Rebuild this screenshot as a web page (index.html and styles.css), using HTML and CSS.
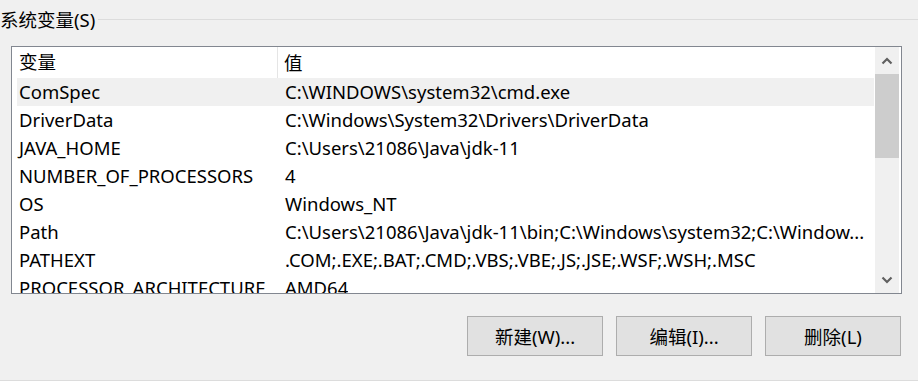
FILE: index.html
```html
<!DOCTYPE html>
<html lang="zh">
<head>
<meta charset="utf-8">
<link rel="stylesheet" href="styles.css">
</head>
<body>
<div class="page">
  <div class="group-title">
    <span class="title-text">系统变量(S)</span>
    <span class="title-line"></span>
  </div>
  <div class="list">
    <div class="list-body">
      <div class="header">
        <div class="cell name">变量</div>
        <div class="cell value">值</div>
      </div>
      <div class="row selected"><div class="cell name">ComSpec</div><div class="cell value">C:\WINDOWS\system32\cmd.exe</div></div>
      <div class="row"><div class="cell name">DriverData</div><div class="cell value">C:\Windows\System32\Drivers\DriverData</div></div>
      <div class="row"><div class="cell name">JAVA_HOME</div><div class="cell value">C:\Users\21086\Java\jdk-11</div></div>
      <div class="row"><div class="cell name">NUMBER_OF_PROCESSORS</div><div class="cell value">4</div></div>
      <div class="row"><div class="cell name">OS</div><div class="cell value">Windows_NT</div></div>
      <div class="row"><div class="cell name">Path</div><div class="cell value">C:\Users\21086\Java\jdk-11\bin;C:\Windows\system32;C:\Window...</div></div>
      <div class="row"><div class="cell name">PATHEXT</div><div class="cell value">.COM;.EXE;.BAT;.CMD;.VBS;.VBE;.JS;.JSE;.WSF;.WSH;.MSC</div></div>
      <div class="row"><div class="cell name">PROCESSOR_ARCHITECTURE</div><div class="cell value">AMD64</div></div>
    </div>
    <div class="scrollbar">
      <div class="arrow">
        <svg width="12" height="8" viewBox="0 0 12 8"><path d="M1.5 6.5 L6 2 L10.5 6.5" fill="none" stroke="#606060" stroke-width="2.2"/></svg>
      </div>
      <div class="track">
        <div class="thumb"></div>
      </div>
      <div class="arrow">
        <svg width="12" height="8" viewBox="0 0 12 8"><path d="M1.5 1.5 L6 6 L10.5 1.5" fill="none" stroke="#606060" stroke-width="2.2"/></svg>
      </div>
    </div>
  </div>
  <div class="buttons">
    <button class="btn">新建(W)...</button>
    <button class="btn">编辑(I)...</button>
    <button class="btn">删除(L)</button>
  </div>
  <div class="bottom-line"></div>
</div>
</body>
</html>
```

FILE: styles.css
```css
html, body {
  margin: 0;
  padding: 0;
  background: #f0f0f0;
}
body {
  font-family: "Noto Sans", "Noto Sans CJK SC", sans-serif;
  font-size: 18.5px;
  color: #000;
}
.page {
  width: 918px;
  height: 381px;
  display: flex;
  flex-direction: column;
  overflow: hidden;
}
.group-title {
  display: flex;
  align-items: center;
  height: 38px;
}
.title-text {
  line-height: 38px;
  white-space: nowrap;
  position: relative;
  top: 1px;
}
.title-line {
  flex: 1;
  height: 1px;
  background: #dcdcdc;
  margin-left: 3px;
  margin-top: 1px;
}
.list {
  margin-top: 8px;
  margin-left: 11px;
  width: 889px;
  height: 246px;
  border: 1px solid #828790;
  background: #fff;
  display: flex;
  overflow: hidden;
}
.list-body {
  width: 857px;
  padding-left: 5px;
  overflow: hidden;
}
.header, .row {
  display: flex;
  white-space: nowrap;
}
.header {
  height: 31px;
  align-items: center;
  margin-left: -5px;
  padding-left: 5px;
}
.row {
  height: 28px;
  align-items: center;
  line-height: 26px;
}
.row.selected {
  background: #f0f0f0;
}
.cell.name {
  width: 261px;
  padding-left: 2px;
  box-sizing: border-box;
  flex: none;
}
.header .cell.name {
  border-right: 1px solid #e5e5e5;
  height: 31px;
  line-height: 29px;
}
.header .cell.value {
  line-height: 29px;
}
.cell.value {
  padding-left: 7px;
  overflow: hidden;
}
.header .cell.value {
  padding-left: 6px;
}
.scrollbar {
  width: 24px;
  margin-left: 1px;
  margin-right: 2px;
  background: #f0f0f0;
  display: flex;
  flex-direction: column;
}
.arrow {
  height: 27px;
  display: flex;
  align-items: center;
  justify-content: center;
  flex: none;
}
.track {
  flex: 1;
}
.thumb {
  height: 84px;
  background: #cdcdcd;
}
.buttons {
  display: flex;
  justify-content: flex-end;
  gap: 13px;
  margin-top: 22px;
  padding-right: 17px;
}
.btn {
  width: 136px;
  height: 40px;
  box-sizing: border-box;
  background: #e1e1e1;
  border: 1px solid #adadad;
  font-family: "Noto Sans", "Noto Sans CJK SC", sans-serif;
  font-size: 18.5px;
  color: #000;
  padding: 0;
  margin: 0;
}
.bottom-line {
  margin-top: auto;
  height: 1px;
  background: #dcdcdc;
}
```
